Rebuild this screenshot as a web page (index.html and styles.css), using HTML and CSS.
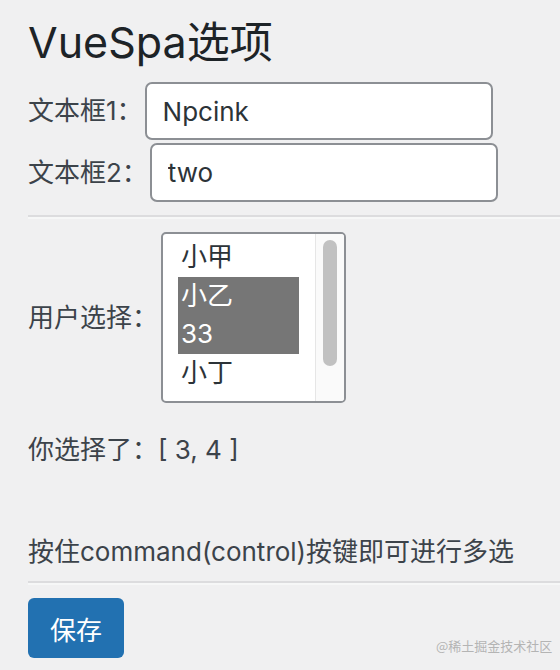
FILE: index.html
```html
<!DOCTYPE html>
<html lang="zh-CN">
<head>
<meta charset="utf-8">
<title>VueSpa选项</title>
<link rel="stylesheet" href="styles.css">
</head>
<body>
<div class="wrap">
  <h1 class="title">VueSpa选项</h1>
  <div class="row row-first">
    <label class="label text-label" for="t1">文本框1：</label>
    <input class="text-input" id="t1" type="text" value="Npcink">
  </div>
  <div class="row row-second">
    <label class="label text-label" for="t2">文本框2：</label>
    <input class="text-input" id="t2" type="text" value="two">
  </div>
  <hr class="divider divider-top">
  <div class="row select-row">
    <span class="label">用户选择：</span>
    <div class="listbox" role="listbox" aria-multiselectable="true">
      <div class="options">
        <div class="option" role="option">小甲</div>
        <div class="option selected" role="option" aria-selected="true">小乙</div>
        <div class="option selected" role="option" aria-selected="true">33</div>
        <div class="option" role="option">小丁</div>
      </div>
      <div class="scrollbar"><div class="thumb"></div></div>
    </div>
  </div>
  <p class="result">你选择了：[ 3, 4 ]</p>
  <p class="hint">按住command(control)按键即可进行多选</p>
  <hr class="divider divider-bottom">
  <button class="save" type="button">保存</button>
</div>
<div class="watermark">@稀土掘金技术社区</div>
</body>
</html>
```
FILE: styles.css
```css
html, body {
  margin: 0;
  padding: 0;
  background: #f0f0f1;
}
body {
  font-family: Inter, "Noto Sans CJK SC", sans-serif;
  color: #3c434a;
  width: 560px;
  height: 670px;
  overflow: hidden;
  position: relative;
}
.wrap {
  padding: 0 0 0 28px;
}
.title {
  margin: 18px 0 0;
  font-size: 43px;
  line-height: 48px;
  font-weight: 400;
  color: #1d2327;
}
.row {
  display: flex;
  align-items: center;
}
.row-first {
  margin-top: 16px;
}
.row-second {
  margin-top: 3px;
}
.label {
  font-size: 26px;
  line-height: 36px;
  color: #3c434a;
}
.text-label {
  margin-right: 2px;
}
.text-input {
  box-sizing: border-box;
  width: 348px;
  height: 58px;
  margin: 0;
  padding: 0 16px;
  border: 2px solid #8c8f94;
  border-radius: 7px;
  background: #fff;
  font-family: Inter, "Noto Sans CJK SC", sans-serif;
  font-size: 26px;
  color: #2c3338;
  outline: none;
}
.row-second .text-input {
  height: 59px;
}
.divider {
  margin: 0;
  height: 0;
  border: 0;
  border-top: 2px solid #dcdcde;
  border-bottom: 2px solid #f6f7f7;
}
.divider-top {
  margin-top: 13px;
}
.select-row {
  margin-top: 13px;
}
.select-row .label {
  margin-right: 3px;
}
.listbox {
  box-sizing: border-box;
  width: 185px;
  height: 171px;
  border: 2px solid #8c8f94;
  border-radius: 5px;
  background: #fff;
  display: flex;
  overflow: hidden;
}
.options {
  flex: 1;
  padding: 4px 16px 0 15px;
  overflow: hidden;
}
.option {
  height: 38.5px;
  line-height: 38.5px;
  padding-left: 3px;
  font-size: 26px;
  color: #2c3338;
  white-space: nowrap;
}
.option.selected {
  background: #767676;
  color: #fff;
}
.scrollbar {
  width: 29px;
  flex: none;
  border-left: 1px solid #e6e6e6;
  background: #fafafa;
  padding: 6px 0 0 7px;
  box-sizing: border-box;
}
.thumb {
  width: 14px;
  height: 126px;
  border-radius: 7px;
  background: #c1c1c1;
}
.result {
  margin: 29px 0 0;
  font-size: 26px;
  line-height: 36px;
}
.hint {
  margin: 66px 0 0;
  font-size: 26px;
  line-height: 36px;
}
.divider-bottom {
  margin-top: 11px;
}
.save {
  margin-top: 13px;
  width: 96px;
  height: 60px;
  border: 0;
  border-radius: 6px;
  background: #2271b1;
  color: #fff;
  font-family: Inter, "Noto Sans CJK SC", sans-serif;
  font-size: 26px;
  padding: 0;
  cursor: pointer;
}
.watermark {
  position: absolute;
  left: 436px;
  top: 637px;
  font-size: 13px;
  line-height: 18px;
  color: #b4b4b4;
  font-family: "Noto Sans CJK SC", sans-serif;
}
```
